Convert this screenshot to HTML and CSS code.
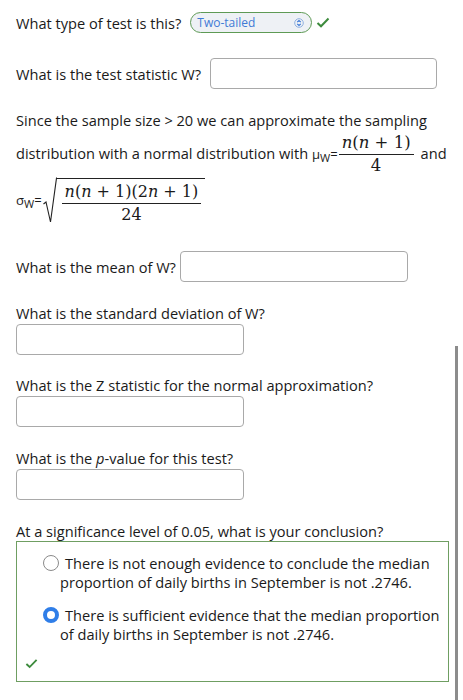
FILE: index.html
```html
<!DOCTYPE html>
<html>
<head>
<meta charset="utf-8">
<link rel="stylesheet" href="styles.css">
</head>
<body>
<div class="page">
  <div class="row r1">
    <span>What type of test is this?</span>
    <span class="select"><span class="sel-text">Two-tailed</span>
      <svg class="chev" width="10" height="10" viewBox="0 0 10 10"><circle cx="5" cy="5" r="4.3" fill="none" stroke="#8fb0e0" stroke-width="1"/><path d="M3.2 4.2 L5 2.6 L6.8 4.2 M3.2 5.8 L5 7.4 L6.8 5.8" fill="none" stroke="#3b78d8" stroke-width="1.1"/></svg>
    </span>
    <svg class="check" width="14" height="11" viewBox="0 0 14 11"><path d="M1.5 6 L5 9.3 L12.5 1.5" fill="none" stroke="#3d8b3d" stroke-width="2"/></svg>
  </div>

  <div class="row r2">
    <span>What is the test statistic W?</span>
    <span class="input wide"></span>
  </div>

  <div class="para">
    <div class="pline l1">Since the sample size &gt; 20 we can approximate the sampling</div>
    <div class="pline l2">distribution with a normal distribution with <span class="sym">μ<sub>W</sub>=</span><span class="frac"><span class="num"><i>n</i>(<i>n</i> + 1)</span><span class="den">4</span></span><span class="and">and</span></div>
    <div class="pline l3"><span class="sym">σ<sub>W</sub>=</span><span class="sqrt"><svg class="rad" width="14" height="46" viewBox="0 0 14 46"><path d="M0.5 27 L3 25 L7.5 45 L13.5 1 L14 1" fill="none" stroke="#222" stroke-width="1.1"/></svg><span class="frac big"><span class="num"><i>n</i>(<i>n</i> + 1)(2<i>n</i> + 1)</span><span class="den">24</span></span></span></div>
  </div>

  <div class="row r3">
    <span>What is the mean of W?</span>
    <span class="input"></span>
  </div>

  <div class="block b1">
    <div class="label">What is the standard deviation of W?</div>
    <span class="input"></span>
  </div>

  <div class="block b2">
    <div class="label">What is the Z statistic for the normal approximation?</div>
    <span class="input"></span>
  </div>

  <div class="block b3">
    <div class="label">What is the <i>p</i>-value for this test?</div>
    <span class="input"></span>
  </div>

  <div class="block b4">
    <div class="label">At a significance level of 0.05, what is your conclusion?</div>
    <div class="choices">
      <div class="opt"><span class="radio"></span>There is not enough evidence to conclude the median proportion of daily births in September is not .2746.</div>
      <div class="opt o2"><span class="radio on"></span>There is sufficient evidence that the median proportion of daily births in September is not .2746.</div>
      <svg class="check c2" width="13" height="11" viewBox="0 0 14 11"><path d="M1.5 6 L5 9.3 L12.5 1.5" fill="none" stroke="#3d8b3d" stroke-width="2"/></svg>
    </div>
  </div>
</div>
<div class="scrollbar"></div>
</body>
</html>
```

FILE: styles.css
```css
html, body {
  margin: 0;
  padding: 0;
  background: #fff;
}
body {
  font-family: "Open Sans", "DejaVu Sans", sans-serif;
  font-size: 14.6px;
  color: #1a1a1a;
  width: 463px;
  height: 700px;
  overflow: hidden;
  position: relative;
}
.page {
  padding: 12px 0 0 16px;
}
.row {
  display: flex;
  align-items: center;
}
.r1 {
  height: 21px;
}
.select {
  margin-left: 9px;
  box-sizing: border-box;
  height: 21px;
  width: 122px;
  border: 1.5px solid #5e9a55;
  border-radius: 11px;
  background: #eef1f5;
  display: flex;
  align-items: center;
  justify-content: space-between;
  padding: 0 7px 0 6px;
}
.sel-text {
  color: #3f7ad6;
  font-size: 12px;
}
.chev { display: block; }
.check { margin-left: 4px; display: block; }
.r2 {
  margin-top: 25px;
  height: 31px;
}
.input {
  display: block;
  box-sizing: border-box;
  width: 228px;
  height: 31px;
  border: 1px solid #a9a9a9;
  border-radius: 4px;
  background: #fff;
}
.r2 .input { margin-left: 9px; width: 227px; }
.r3 .input { margin-left: 4px; width: 228px; }
.para { margin-top: 21px; }
.pline { white-space: nowrap; }
.l1 { height: 20px; line-height: 20px; }
.l2 { height: 44px; line-height: 44px; margin-top: 1px; }
.l3 { height: 50px; display: flex; align-items: center; }
.sym { font-size: 13px; }
.sym sub { font-size: 11px; vertical-align: -3px; line-height: 0; }
.and { margin-left: 7px; }
.frac {
  display: inline-flex;
  flex-direction: column;
  align-items: center;
  vertical-align: middle;
  font-family: "DejaVu Serif", "Liberation Serif", serif;
  font-size: 16.5px;
  line-height: 19px;
  margin-left: 1px;
  position: relative;
  top: -1px;
}
.frac .num {
  border-bottom: 1px solid #222;
  padding: 0 3px 2px;
}
.frac .den { padding-top: 1px; }
.sqrt {
  display: inline-flex;
  align-items: flex-start;
  margin-left: 1px;
}
.rad { display: block; }
.big {
  border-top: 1px solid #222;
  padding: 3px 4px 0 6px;
  margin-left: -1px;
  margin-top: 1px;
  font-size: 16px;
  top: 0;
}
.r3 { margin-top: 26px; height: 31px; }
.block .label { line-height: 20px; }
.block .input { margin-top: 1px; }
.b1 { margin-top: 21px; }
.b2 { margin-top: 20px; }
.b3 { margin-top: 21px; }
.b4 { margin-top: 21px; }
.choices {
  box-sizing: border-box;
  width: 433px;
  height: 141px;
  border: 1px solid #6f9e62;
  padding: 12px 6px 0 26px;
  position: relative;
}
.opt {
  line-height: 19px;
  position: relative;
  padding-left: 17px;
  text-indent: 5px;
}
.o2 { margin-top: 14px; }
.radio {
  position: absolute;
  left: 0;
  top: 1px;
  width: 16px;
  height: 16px;
  box-sizing: border-box;
  border: 1.5px solid #8a8a8a;
  border-radius: 50%;
  background: #fff;
}
.radio.on {
  border: 4.5px solid #2f7ee8;
}
.c2 {
  position: absolute;
  left: 4px;
  bottom: 12px;
}
.scrollbar {
  position: absolute;
  left: 455px;
  top: 346px;
  width: 3px;
  height: 354px;
  background: #8c8c8c;
}
```
